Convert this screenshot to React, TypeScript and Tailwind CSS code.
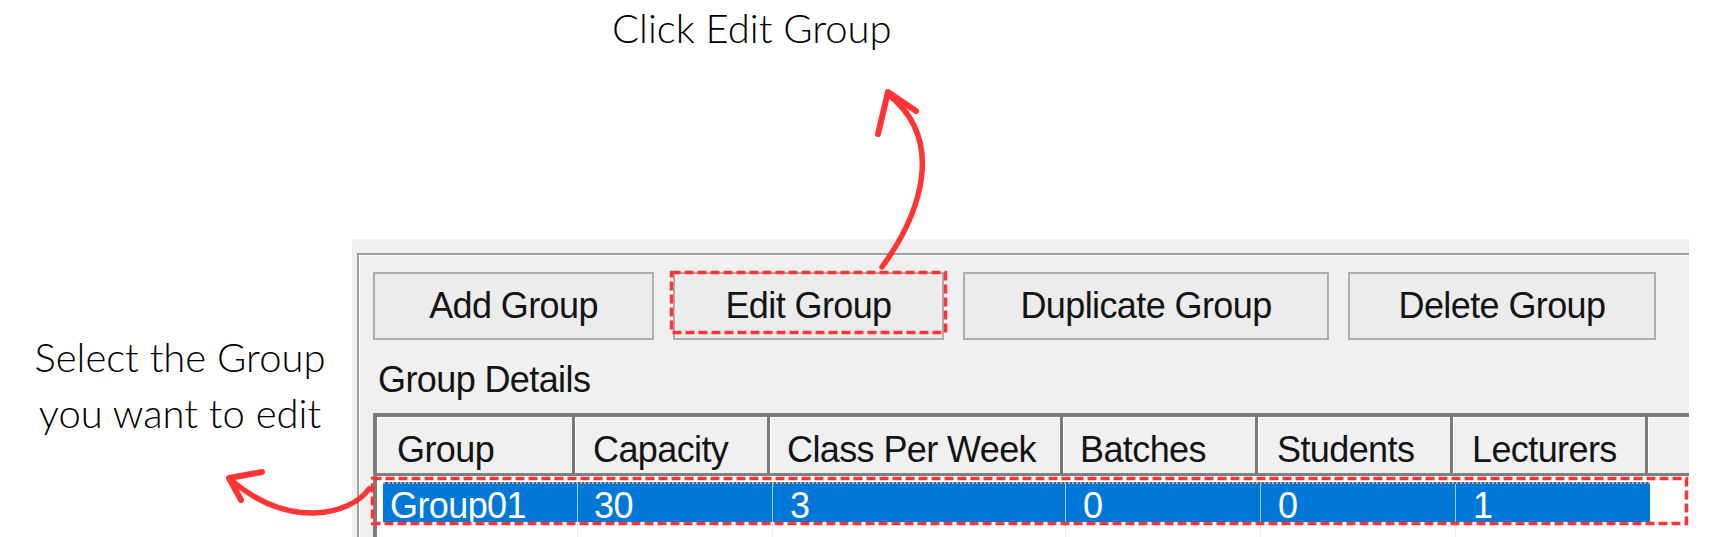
import React from 'react';

const buttons = [
    { label: 'Add Group', w: 'w-[281px]' },
    { label: 'Edit Group', w: 'w-[271px]' },
    { label: 'Duplicate Group', w: 'w-[366px]' },
    { label: 'Delete Group', w: 'w-[308px]' },
];

const columns = [
    { label: 'Group', w: 'w-[198px]', pl: 'pl-[20px]' },
    { label: 'Capacity', w: 'w-[195px]', pl: 'pl-[18px]' },
    { label: 'Class Per Week', w: 'w-[293px]', pl: 'pl-[17px]' },
    { label: 'Batches', w: 'w-[195px]', pl: 'pl-[17px]' },
    { label: 'Students', w: 'w-[195px]', pl: 'pl-[19px]' },
    { label: 'Lecturers', w: 'w-[195px]', pl: 'pl-[19px]' },
];

const row = [
    { value: 'Group01', w: 'w-[194px]', pl: 'pl-[7px]' },
    { value: '30', w: 'w-[195px]', pl: 'pl-[16px]' },
    { value: '3', w: 'w-[293px]', pl: 'pl-[17px]' },
    { value: '0', w: 'w-[195px]', pl: 'pl-[17px]' },
    { value: '0', w: 'w-[195px]', pl: 'pl-[17px]' },
    { value: '1', w: 'w-[195px]', pl: 'pl-[17px]' },
];

// red hand-drawn callouts on top of the screenshot
function Annotations() {
    return (
        <svg
            className="absolute inset-0 pointer-events-none"
            width="1713"
            height="537"
            viewBox="0 0 1713 537"
            fill="none"
        >
            <rect x="671.5" y="272.5" width="274" height="60" stroke="#ff3535" strokeWidth="3.5" strokeDasharray="9 4" />
            <rect x="372.5" y="478.5" width="1314" height="45" stroke="#ff3535" strokeWidth="3.5" strokeDasharray="9 4" />

            {/* up arrow to Edit Group */}
            <path d="M882 267 C922 212 945 140 889 95" stroke="#ff3535" strokeWidth="5.5" strokeLinecap="round" />
            <path d="M878 134 L888 92 L916 111" stroke="#ff3535" strokeWidth="6" strokeLinecap="round" strokeLinejoin="round" />

            {/* left arrow from the row */}
            <path d="M369 489 C350 515 290 530 231 480" stroke="#ff3535" strokeWidth="5.5" strokeLinecap="round" />
            <path d="M262 472 L229 478 L241 500" stroke="#ff3535" strokeWidth="6" strokeLinecap="round" strokeLinejoin="round" />
        </svg>
    );
}

export default function App() {
    return (
        <div className="relative w-[1713px] h-[537px] overflow-hidden bg-white">
            <div className="h-[239px] pt-[8px] pl-[612px] text-[40px] leading-none font-light text-black font-['Lato',sans-serif]">
                Click Edit Group
            </div>

            <div className="flex h-[298px]">
                <div className="w-[352px] pt-[90px] pl-[8px] text-center text-[40px] leading-[56px] font-light text-black font-['Lato',sans-serif]">
                    <div>Select the Group</div>
                    <div>you want to edit</div>
                </div>

                <div className="w-[1337px] overflow-hidden bg-[#f0f0f0] font-['Liberation_Sans',Arial,sans-serif] text-[36px] leading-none tracking-[-0.6px] text-[#141414]">
                    <div className="ml-[5px] mt-[14px] w-[1500px] h-[400px] border-t-2 border-l-2 border-[#a0a0a0] shadow-[inset_1px_1px_0_#ffffff]">
                        <div className="flex gap-[19px] ml-[14px] mt-[17px]">
                            {buttons.map(b => (
                                <div
                                    key={b.label}
                                    className={`${b.w} h-[68px] flex items-center justify-center border-2 border-[#adadad] bg-[#ececec]`}
                                >
                                    {b.label}
                                </div>
                            ))}
                        </div>

                        <div className="ml-[19px] mt-[22px] h-[36px]">Group Details</div>

                        <div className="ml-[14px] mt-[15px] w-[1450px] bg-white border-t-4 border-l-4 border-[#7d7d7d]">
                            <div className="flex h-[59px] border-b-[3px] border-[#808080] bg-[#f0f0f0]">
                                {columns.map(c => (
                                    <div
                                        key={c.label}
                                        className={`${c.w} ${c.pl} pt-[15px] border-r-[3px] border-[#7a7a7a] shadow-[inset_1px_1px_0_#ffffff]`}
                                    >
                                        {c.label}
                                    </div>
                                ))}
                                <div className="flex-1 shadow-[inset_1px_1px_0_#ffffff]" />
                            </div>

                            <div className="flex h-[40px] mt-[6px] pl-[6px]">
                                <div className="flex bg-[#0078d7] text-white border-t-2 border-dotted border-[#d7a46c]">
                                    {row.map((r, i) => (
                                        <div
                                            key={i}
                                            className={`${r.w} ${r.pl} pt-[4px] ${i > 0 ? 'border-l border-[#9fcbf0]' : ''}`}
                                        >
                                            {r.value}
                                        </div>
                                    ))}
                                </div>
                            </div>

                            <div className="flex h-[40px] pl-[6px]">
                                {row.map((r, i) => (
                                    <div key={i} className={`${r.w} ${i > 0 ? 'border-l border-[#ececec]' : ''}`} />
                                ))}
                            </div>
                        </div>
                    </div>
                </div>
            </div>

            <Annotations />
        </div>
    );
}
